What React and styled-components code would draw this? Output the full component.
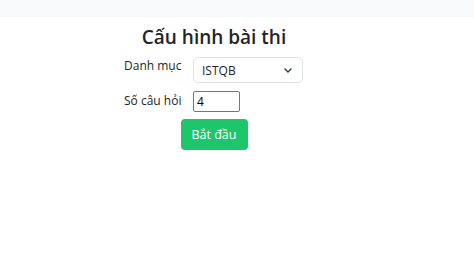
import styled, { createGlobalStyle } from 'styled-components';

const GlobalStyle = createGlobalStyle`
  body {
    margin: 0;
    background: #fff;
    font-family: "Open Sans", "Noto Sans", sans-serif;
    color: #212529;
  }
`;

const TopBar = styled.div`
  height: 17px;
  background: #f8f9fa;
`;

const Main = styled.main`
  padding-left: 124px;
`;

const Container = styled.div`
  width: 180px;
  display: flex;
  flex-direction: column;
`;

const Title = styled.h1`
  margin: 6px 0 0;
  font-size: 19px;
  font-weight: 600;
  line-height: 28px;
  text-align: center;
  white-space: nowrap;
`;

const Row = styled.div`
  display: grid;
  grid-template-columns: 69px 1fr;
  align-items: start;
  margin-top: ${(p) => p.$mt || 0}px;
`;

const Label = styled.label`
  font-size: 12px;
  line-height: 16px;
  padding-top: ${(p) => p.$pt || 0}px;
  white-space: nowrap;
`;

const SelectBox = styled.div`
  width: 110px;
  height: 26px;
  box-sizing: border-box;
  border: 1px solid #dee2e6;
  border-radius: 5px;
  display: flex;
  align-items: center;
  justify-content: space-between;
  padding: 0 10px 0 8px;
  font-size: 12px;
`;

const NumberInput = styled.input`
  width: 47px;
  height: 21px;
  box-sizing: border-box;
  border: 1px solid #767676;
  border-radius: 2px;
  padding: 0 3px;
  font-family: inherit;
  font-size: 12px;
  color: #000;
`;

const StartButton = styled.button`
  align-self: center;
  margin-top: 7px;
  width: 67px;
  height: 31px;
  border: none;
  border-radius: 4px;
  background: #1dc66b;
  color: #fff;
  font-family: inherit;
  font-size: 12.5px;
  font-weight: 500;
`;

export default function App() {
  return (
    <>
      <GlobalStyle />
      <TopBar />
      <Main>
        <Container>
          <Title>Cấu hình bài thi</Title>
          <Row $mt={6}>
            <Label $pt={1}>Danh mục</Label>
            <SelectBox>
              <span>ISTQB</span>
              <svg width="8" height="5" viewBox="0 0 8 5">
                <path d="M1 1l3 3 3-3" fill="none" stroke="#343a40" strokeWidth="1.4" strokeLinecap="round" strokeLinejoin="round" />
              </svg>
            </SelectBox>
          </Row>
          <Row $mt={8}>
            <Label $pt={2}>Số câu hỏi</Label>
            <NumberInput type="number" defaultValue={4} />
          </Row>
          <StartButton>Bắt đầu</StartButton>
        </Container>
      </Main>
    </>
  );
}
